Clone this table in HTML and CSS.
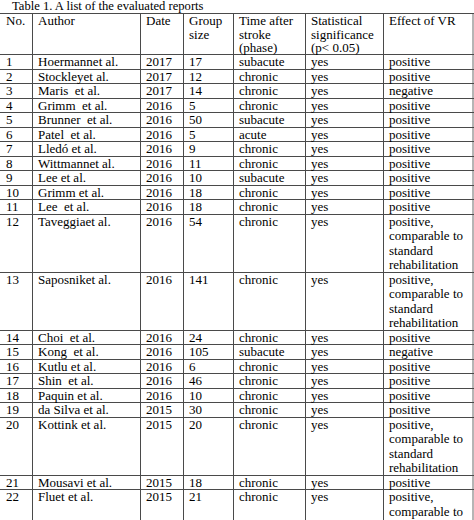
FILE: index.html
```html
<!DOCTYPE html>
<html>
<head>
<meta charset="utf-8">
<link rel="stylesheet" href="styles.css">
</head>
<body>
<div class="caption">Table 1. A list of the evaluated reports</div>
<table class="reports">
<colgroup>
<col class="c-no"><col class="c-author"><col class="c-date"><col class="c-size"><col class="c-time"><col class="c-sig"><col class="c-eff">
</colgroup>
<thead>
<tr><th>No.</th><th>Author</th><th>Date</th><th>Group<br>size</th><th>Time after<br>stroke<br>(phase)</th><th>Statistical<br>significance<br>(p&lt; 0.05)</th><th class="last">Effect of VR</th></tr>
</thead>
<tbody>
<tr><td>1</td><td>Hoermannet al.</td><td>2017</td><td>17</td><td>subacute</td><td>yes</td><td class="last">positive</td></tr>
<tr><td>2</td><td>Stockleyet al.</td><td>2017</td><td>12</td><td>chronic</td><td>yes</td><td class="last">positive</td></tr>
<tr><td>3</td><td>Maris&nbsp; et al.</td><td>2017</td><td>14</td><td>chronic</td><td>yes</td><td class="last">negative</td></tr>
<tr><td>4</td><td>Grimm&nbsp; et al.</td><td>2016</td><td>5</td><td>chronic</td><td>yes</td><td class="last">positive</td></tr>
<tr><td>5</td><td>Brunner&nbsp; et al.</td><td>2016</td><td>50</td><td>subacute</td><td>yes</td><td class="last">positive</td></tr>
<tr><td>6</td><td>Patel&nbsp; et al.</td><td>2016</td><td>5</td><td>acute</td><td>yes</td><td class="last">positive</td></tr>
<tr><td>7</td><td>Lledó et al.</td><td>2016</td><td>9</td><td>chronic</td><td>yes</td><td class="last">positive</td></tr>
<tr><td>8</td><td>Wittmannet al.</td><td>2016</td><td>11</td><td>chronic</td><td>yes</td><td class="last">positive</td></tr>
<tr><td>9</td><td>Lee et al.</td><td>2016</td><td>10</td><td>subacute</td><td>yes</td><td class="last">positive</td></tr>
<tr><td>10</td><td>Grimm et al.</td><td>2016</td><td>18</td><td>chronic</td><td>yes</td><td class="last">positive</td></tr>
<tr><td>11</td><td>Lee&nbsp; et al.</td><td>2016</td><td>18</td><td>chronic</td><td>yes</td><td class="last">positive</td></tr>
<tr><td>12</td><td>Taveggiaet al.</td><td>2016</td><td>54</td><td>chronic</td><td>yes</td><td class="last">positive,<br>comparable to<br>standard<br>rehabilitation</td></tr>
<tr><td>13</td><td>Saposniket al.</td><td>2016</td><td>141</td><td>chronic</td><td>yes</td><td class="last">positive,<br>comparable to<br>standard<br>rehabilitation</td></tr>
<tr><td>14</td><td>Choi&nbsp; et al.</td><td>2016</td><td>24</td><td>chronic</td><td>yes</td><td class="last">positive</td></tr>
<tr><td>15</td><td>Kong&nbsp; et al.</td><td>2016</td><td>105</td><td>subacute</td><td>yes</td><td class="last">negative</td></tr>
<tr><td>16</td><td>Kutlu et al.</td><td>2016</td><td>6</td><td>chronic</td><td>yes</td><td class="last">positive</td></tr>
<tr><td>17</td><td>Shin&nbsp; et al.</td><td>2016</td><td>46</td><td>chronic</td><td>yes</td><td class="last">positive</td></tr>
<tr><td>18</td><td>Paquin et al.</td><td>2016</td><td>10</td><td>chronic</td><td>yes</td><td class="last">positive</td></tr>
<tr><td>19</td><td>da Silva et al.</td><td>2015</td><td>30</td><td>chronic</td><td>yes</td><td class="last">positive</td></tr>
<tr><td>20</td><td>Kottink et al.</td><td>2015</td><td>20</td><td>chronic</td><td>yes</td><td class="last">positive,<br>comparable to<br>standard<br>rehabilitation</td></tr>
<tr><td>21</td><td>Mousavi et al.</td><td>2015</td><td>18</td><td>chronic</td><td>yes</td><td class="last">positive</td></tr>
<tr><td>22</td><td>Fluet et al.</td><td>2015</td><td>21</td><td>chronic</td><td>yes</td><td class="last">positive,<br>comparable to<br>standard<br>rehabilitation</td></tr>
</tbody>
</table>
</body>
</html>
```
FILE: styles.css
```css
html, body {
  margin: 0;
  padding: 0;
  overflow: hidden;
  background: #fff;
}
body {
  font-family: "Liberation Serif", "Times New Roman", serif;
  font-size: 13px;
  color: #000;
}
.caption {
  font-size: 12.6px;
  line-height: 13px;
  padding-left: 12px;
  height: 13px;
}
.reports {
  border-collapse: separate;
  border-spacing: 0;
  table-layout: fixed;
  width: 474px;
  border-top: 1px solid #4a4a4a;
}
.c-no { width: 33px; }
.c-author { width: 108px; }
.c-date { width: 43px; }
.c-size { width: 50px; }
.c-time { width: 72px; }
.c-sig { width: 78px; }
.c-eff { width: 90px; }
.reports th,
.reports td {
  padding: 0 0 0 5px;
  text-align: left;
  vertical-align: top;
  font-weight: normal;
  box-shadow: inset -1px -1px 0 #4a4a4a;
  white-space: nowrap;
}
.reports th {
  line-height: 13.67px;
}
.reports td {
  line-height: 14.5px;
}
.reports th:first-child,
.reports td:first-child {
  padding-left: 6px;
}
.reports th.last,
.reports td.last {
  box-shadow: inset 0 -1px 0 #4a4a4a, inset -2px 0 0 #b5b5b5;
}
```
